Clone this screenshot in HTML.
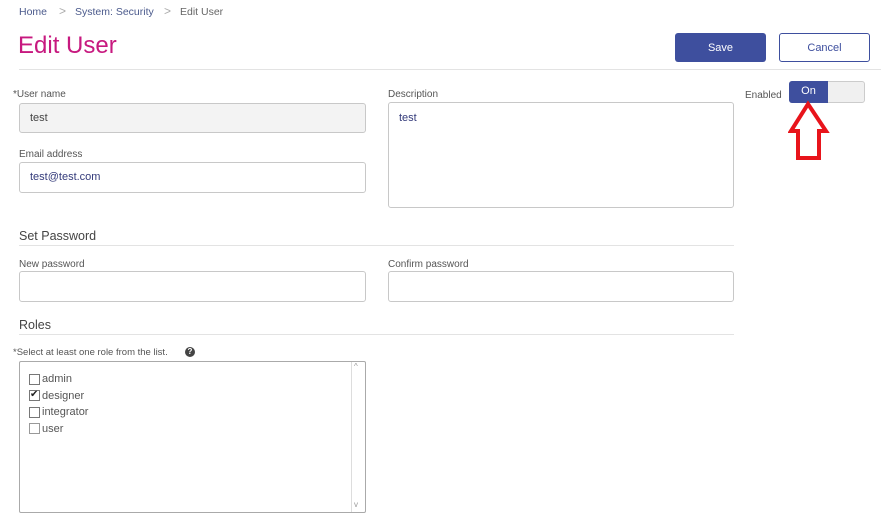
<!DOCTYPE html>
<html><head><style>
body{margin:0;width:881px;height:517px;background:#fff;font-family:"Liberation Sans",sans-serif;position:relative;overflow:hidden;color:#555}
.a{position:absolute}
.lbl{font-size:10px;color:#555}
.inp{position:absolute;border:1px solid #c8c8c8;border-radius:3px;background:#fff;box-sizing:border-box;font-size:11px;color:#333a7a;padding-left:10px}
.hr{position:absolute;height:1px;background:#e3e3e3}
.cb{position:absolute;width:9px;height:9px;border:1px solid #777;left:29px;background:#fff}
.it{position:absolute;left:42px;font-size:11px;color:#555}
</style></head><body>
<div class="a" style="left:19px;top:6px;font-size:10.5px;color:#4b5a8c">Home</div>
<div class="a" style="left:59px;top:4px;font-size:12px;color:#aaa">&gt;</div>
<div class="a" style="left:75px;top:6px;font-size:10.5px;color:#4b5a8c">System: Security</div>
<div class="a" style="left:164px;top:4px;font-size:12px;color:#aaa">&gt;</div>
<div class="a" style="left:180px;top:6px;font-size:10.5px;color:#666">Edit User</div>
<div class="a" style="left:18px;top:32px;font-size:24px;color:#c7197f">Edit User</div>
<div class="a" style="left:675px;top:33px;width:91px;height:29px;background:#3e4f9e;border-radius:3px;color:#fff;font-size:11px;text-align:center;line-height:30px">Save</div>
<div class="a" style="left:779px;top:33px;width:91px;height:29px;border:1px solid #3e4f9e;box-sizing:border-box;border-radius:3px;color:#3e4f9e;font-size:11px;text-align:center;line-height:28px">Cancel</div>
<div class="hr" style="left:19px;top:69px;width:862px"></div>
<div class="a lbl" style="left:13px;top:89px">*User name</div>
<div class="inp" style="left:19px;top:103px;width:347px;height:30px;background:#f3f3f3;color:#444;line-height:28px">test</div>
<div class="a lbl" style="left:19px;top:149px">Email address</div>
<div class="inp" style="left:19px;top:162px;width:347px;height:31px;line-height:29px">test@test.com</div>
<div class="a lbl" style="left:388px;top:89px">Description</div>
<div class="inp" style="left:388px;top:102px;width:346px;height:106px;padding-top:9px">test</div>
<div class="a lbl" style="left:745px;top:90px">Enabled</div>
<div class="a" style="left:789px;top:81px;width:76px;height:22px;border:1px solid #ccc;box-sizing:border-box;border-radius:3px;background:#f0f0f0"></div>
<div class="a" style="left:789px;top:81px;width:39px;height:22px;background:#3e4f9e;border-radius:3px 0 0 3px;color:#fff;font-size:11px;text-align:center;line-height:20px">On</div>
<svg class="a" style="left:788px;top:100px" width="42" height="62"><path d="M20 4 L38 31 L31 31 L31 58 L10 58 L10 31 L3 31 Z" fill="none" stroke="#e8141b" stroke-width="4" stroke-linejoin="miter"/></svg>
<div class="a" style="left:19px;top:229px;font-size:12.5px;color:#444">Set Password</div>
<div class="hr" style="left:19px;top:245px;width:715px"></div>
<div class="a lbl" style="left:19px;top:259px">New password</div>
<div class="a lbl" style="left:388px;top:259px">Confirm password</div>
<div class="inp" style="left:19px;top:271px;width:347px;height:31px"></div>
<div class="inp" style="left:388px;top:271px;width:346px;height:31px"></div>
<div class="a" style="left:19px;top:318px;font-size:12.5px;color:#444">Roles</div>
<div class="hr" style="left:19px;top:334px;width:715px"></div>
<div class="a" style="left:13px;top:347px;font-size:9.5px;color:#555">*Select at least one role from the list.</div>
<div class="a" style="left:185px;top:347px;width:10px;height:10px;border-radius:50%;background:#444;color:#fff;font-size:8px;font-weight:bold;text-align:center;line-height:10px">?</div>
<div class="a" style="left:19px;top:361px;width:347px;height:152px;border:1px solid #aaa;box-sizing:border-box;border-radius:2px"></div>
<div class="a" style="left:351px;top:362px;width:1px;height:150px;background:#ddd"></div>
<div class="a" style="left:354px;top:362px;font-size:8px;color:#999">^</div>
<div class="a" style="left:354px;top:500px;font-size:8px;color:#999">v</div>
<div class="cb" style="top:374px"></div><div class="it" style="top:373px">admin</div>
<div class="cb" style="top:390px;font-size:10px;line-height:8px;color:#222">✔</div><div class="it" style="top:390px">designer</div>
<div class="cb" style="top:407px"></div><div class="it" style="top:406px">integrator</div>
<div class="cb" style="top:423px;border-color:#999"></div><div class="it" style="top:423px">user</div>
</body></html>
